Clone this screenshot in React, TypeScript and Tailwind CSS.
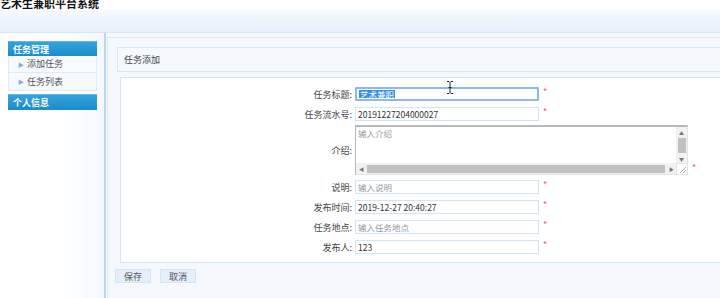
import React from "react";

const font = { fontFamily: '"Noto Sans CJK SC", "Liberation Sans", sans-serif' };

function Row({ label, value, placeholder, focused }: { label: string; value?: string; placeholder?: string; focused?: boolean }) {
  return (
    <div className="flex items-center h-[20px]">
      <div className="w-[234px] text-right text-[9px] text-[#444] pr-[3px] leading-none">{label}:</div>
      <div
        className={
          "w-[184px] h-[14px] flex items-center bg-white px-[2px] text-[8.5px] leading-none " +
          (focused ? "border-2 border-[#8ab8f0] rounded-[1px]" : "border border-[#cfe4fa]")
        }
      >
        {focused ? (
          <span className="bg-[#3b8ee8] text-white px-[1px] text-[8.5px]">{value}</span>
        ) : value ? (
          <span className="text-[#333]">{value}</span>
        ) : (
          <span className="text-[#999]">{placeholder}</span>
        )}
      </div>
      <span className="ml-[4px] self-start mt-[3px] text-[9px] leading-none text-[#f55]">*</span>
    </div>
  );
}

export default function App() {
  return (
    <div className="w-[720px] h-[298px] overflow-hidden relative bg-white" style={font}>
      {/* header */}
      <div className="h-[10px] overflow-hidden bg-white">
        <div className="mt-[-4px] text-[11px] leading-[14px] font-bold text-[#111] whitespace-nowrap">艺术生兼职平台系统</div>
      </div>
      <div className="h-[23px] bg-gradient-to-b from-[#f5f9fe] to-[#e6f1fc] border-b border-[#d3e6f8]" />

      <div className="flex h-[265px]">
        {/* sidebar */}
        <div className="w-[106px] border-r-2 border-[#b8d8f3] bg-gradient-to-r from-white from-60% to-[#f4f8fe] pt-[8px] pl-[8px] shrink-0">
          <div className="w-[89px]">
            <div className="h-[15px] bg-gradient-to-b from-[#34a3dc] to-[#1a8ccb] text-white text-[9px] font-bold leading-[15px] pl-[5px] border-t border-[#5fb8e6]">任务管理</div>
            <div className="h-[17px] bg-[#f6f9fd] border-x border-b border-[#e0eaf4] flex items-center text-[9px] text-[#555] pl-[9px]">
              <span className="text-[6px] text-[#7fb0d8] mr-[3px]">▶</span>添加任务
            </div>
            <div className="h-[18px] bg-[#f6f9fd] border-x border-b border-[#e0eaf4] flex items-center text-[9px] text-[#555] pl-[9px]">
              <span className="text-[6px] text-[#7fb0d8] mr-[3px]">▶</span>任务列表
            </div>
            <div className="mt-[3px] h-[16px] bg-gradient-to-b from-[#34a3dc] to-[#1a8ccb] text-white text-[9px] font-bold leading-[16px] pl-[5px] border-t border-[#5fb8e6]">个人信息</div>
          </div>
        </div>

        {/* main */}
        <div className="flex-1 bg-[#f5f9fe] pt-[4px] pl-[1px]">
          <div className="h-full border-l border-t border-[#dbe9f7] pt-[9px] pl-[9px]">
            <div className="h-[25px] border border-[#d6e8f8] border-r-0 bg-[#f5f9fe] flex items-center pl-[6px] text-[9px] text-[#444]">任务添加</div>
            <div className="mt-[5px] ml-[3px] h-[186px] bg-white border border-[#d3e6f8] border-r-0 pt-[6px]">
              <Row label="任务标题" value="艺术兼职" focused />
              <Row label="任务流水号" value="20191227204000027" />
              <div className="flex items-center h-[53px]">
                <div className="w-[234px] text-right text-[9px] text-[#444] pr-[3px] leading-none">介绍:</div>
                <div className="self-start mt-[1px] w-[333px] h-[50px] border-t-2 border-l border-[#b9b9b9] border-r border-b border-r-[#e4e4e4] border-b-[#e4e4e4] bg-white relative">
                  <div className="text-[8.5px] text-[#999] pl-[2px] pt-[2px] leading-none">输入介绍</div>
                  {/* vertical scrollbar */}
                  <div className="absolute right-0 top-0 w-[11px] h-[37px] bg-[#f1f1f1] flex flex-col items-center">
                    <span className="text-[5px] text-[#777] leading-none mt-[3px]">▲</span>
                    <div className="w-[8px] h-[15px] bg-[#c1c1c1] mt-[3px]" />
                    <span className="text-[5px] text-[#777] leading-none mt-[3px]">▼</span>
                  </div>
                  {/* horizontal scrollbar */}
                  <div className="absolute left-0 bottom-0 w-[321px] h-[11px] bg-[#f1f1f1] flex items-center">
                    <span className="text-[5px] text-[#777] leading-none ml-[3px]">◀</span>
                    <div className="h-[8px] w-[298px] bg-[#c1c1c1] ml-[3px]" />
                    <span className="text-[5px] text-[#777] leading-none ml-[4px]">▶</span>
                  </div>
                  {/* resize corner */}
                  <div className="absolute right-0 bottom-0 w-[11px] h-[11px] bg-white border-l border-t border-[#e4e4e4]">
                    <svg width="10" height="10" viewBox="0 0 10 10">
                      <path d="M9 3 L3 9 M9 6 L6 9" stroke="#999" strokeWidth="0.8" />
                    </svg>
                  </div>
                </div>
                <span className="ml-[4px] self-end mb-[5px] text-[9px] leading-none text-[#f55]">*</span>
              </div>
              <Row label="说明" placeholder="输入说明" />
              <Row label="发布时间" value="2019-12-27 20:40:27" />
              <Row label="任务地点" placeholder="输入任务地点" />
              <Row label="发布人" value="123" />
            </div>
            <div className="flex gap-[9px] mt-[6px] ml-[-2px]">
              <div className="w-[36px] h-[14px] bg-[#e3effb] border border-[#d3e6f8] text-[9px] text-[#555] flex items-center justify-center leading-none">保存</div>
              <div className="w-[36px] h-[14px] bg-[#e3effb] border border-[#d3e6f8] text-[9px] text-[#555] flex items-center justify-center leading-none">取消</div>
            </div>
          </div>
        </div>
      </div>

      {/* mouse I-beam cursor */}
      <svg className="absolute left-[446px] top-[81px]" width="8" height="13" viewBox="0 0 8 13">
        <path d="M1 0.5 H3 L4 1.5 L5 0.5 H7 M4 1.5 V11.5 M1 12.5 H3 L4 11.5 L5 12.5 H7 M2.5 6.5 H5.5" stroke="#222" strokeWidth="1" fill="none" />
      </svg>
    </div>
  );
}
